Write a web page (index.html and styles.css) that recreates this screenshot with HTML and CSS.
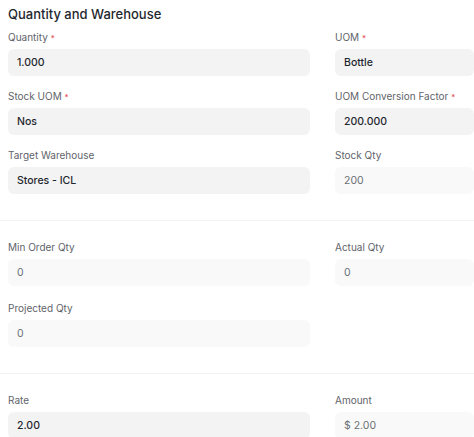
FILE: index.html
```html
<!DOCTYPE html>
<html lang="en">
<head>
<meta charset="utf-8">
<title>Quantity and Warehouse</title>
<link rel="stylesheet" href="styles.css">
</head>
<body>
<div class="form">
  <section class="section first">
    <h3 class="section-title">Quantity and Warehouse</h3>
    <div class="cols">
      <div class="col">
        <div class="field">
          <label class="label">Quantity <span class="req">*</span></label>
          <div class="input">1.000</div>
        </div>
        <div class="field">
          <label class="label">Stock UOM <span class="req">*</span></label>
          <div class="input">Nos</div>
        </div>
        <div class="field">
          <label class="label">Target Warehouse</label>
          <div class="input">Stores - ICL</div>
        </div>
      </div>
      <div class="col">
        <div class="field">
          <label class="label">UOM <span class="req">*</span></label>
          <div class="input">Bottle</div>
        </div>
        <div class="field">
          <label class="label">UOM Conversion Factor <span class="req">*</span></label>
          <div class="input">200.000</div>
        </div>
        <div class="field">
          <label class="label">Stock Qty</label>
          <div class="input readonly">200</div>
        </div>
      </div>
    </div>
  </section>
  <section class="section">
    <div class="cols">
      <div class="col loose">
        <div class="field">
          <label class="label">Min Order Qty</label>
          <div class="input readonly">0</div>
        </div>
        <div class="field">
          <label class="label">Projected Qty</label>
          <div class="input readonly">0</div>
        </div>
      </div>
      <div class="col loose">
        <div class="field">
          <label class="label">Actual Qty</label>
          <div class="input readonly">0</div>
        </div>
      </div>
    </div>
  </section>
  <section class="section last">
    <div class="cols">
      <div class="col">
        <div class="field">
          <label class="label">Rate</label>
          <div class="input">2.00</div>
        </div>
      </div>
      <div class="col">
        <div class="field">
          <label class="label">Amount</label>
          <div class="input readonly">$ 2.00</div>
        </div>
      </div>
    </div>
  </section>
</div>
</body>
</html>
```
FILE: styles.css
```css
html, body {
  margin: 0;
  padding: 0;
  overflow: hidden;
  background: #ffffff;
}

body {
  font-family: Inter, "Noto Sans", "Liberation Sans", sans-serif;
  color: #1f272e;
}

.form {
  width: 474px;
  height: 437px;
  overflow: hidden;
}

.section {
  padding: 18px 0 26px 8px;
  border-bottom: 1px solid #f1f2f3;
}

.section.first {
  padding-top: 4px;
}

.section.last {
  border-bottom: none;
}

.section-title {
  margin: 0 0 5px 0;
  height: 20px;
  font-size: 13px;
  line-height: 20px;
  font-weight: 500;
  color: #1f272e;
}

.cols {
  display: grid;
  grid-template-columns: 302px 1fr;
  column-gap: 25px;
}

.col {
  display: flex;
  flex-direction: column;
  gap: 12px;
  min-width: 0;
}

.col.loose {
  gap: 14px;
}

.field {
  display: flex;
  flex-direction: column;
}

.label {
  display: block;
  height: 16px;
  font-size: 10px;
  line-height: 16px;
  color: #5f646a;
  margin-bottom: 4px;
  white-space: nowrap;
  overflow: visible;
}

.req {
  color: #e5484d;
  font-size: 8px;
  line-height: 1;
}

.input {
  height: 27px;
  line-height: 27px;
  padding: 0 9px;
  border-radius: 6px;
  background: #f3f3f4;
  font-size: 10.5px;
  font-weight: 500;
  color: #1f272e;
}

.input.readonly {
  background: #f9f9f9;
  color: #6b7075;
  font-weight: 400;
}
```
